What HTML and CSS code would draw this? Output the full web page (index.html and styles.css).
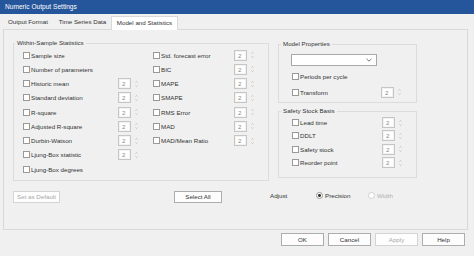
FILE: index.html
```html
<!DOCTYPE html>
<html lang="en">
<head>
    <meta charset="UTF-8">
    <title>Numeric Output Settings</title>
    <link rel="stylesheet" href="styles.css">
</head>
<body>
    <div class="titlebar">Numeric Output Settings</div>
    <div class="tabs">
        <div class="tab tab-format">Output Format</div>
        <div class="tab tab-series">Time Series Data</div>
        <div class="tab tab-model active">Model and Statistics</div>
    </div>
    <div class="tabpage">
        <div class="groups">
            <fieldset class="group stats">
                <legend>Within-Sample Statistics</legend>
                <div class="stats-cols">
                    <div class="stats-col left">
                        <div class="row"><span class="opt"><span class="check"></span>Sample size</span></div>
                        <div class="row"><span class="opt"><span class="check"></span>Number of parameters</span></div>
                        <div class="row"><span class="opt"><span class="check"></span>Historic mean</span><span class="spin"><span class="spin-box">2</span><svg class="spin-arrows" viewBox="0 0 5 10"><path d="M1.5 3.5 L2.5 2.5 L3.5 3.5 M1.5 6.5 L2.5 7.5 L3.5 6.5"/></svg></span></div>
                        <div class="row"><span class="opt"><span class="check"></span>Standard deviation</span><span class="spin"><span class="spin-box">2</span><svg class="spin-arrows" viewBox="0 0 5 10"><path d="M1.5 3.5 L2.5 2.5 L3.5 3.5 M1.5 6.5 L2.5 7.5 L3.5 6.5"/></svg></span></div>
                        <div class="row"><span class="opt"><span class="check"></span>R-square</span><span class="spin"><span class="spin-box">2</span><svg class="spin-arrows" viewBox="0 0 5 10"><path d="M1.5 3.5 L2.5 2.5 L3.5 3.5 M1.5 6.5 L2.5 7.5 L3.5 6.5"/></svg></span></div>
                        <div class="row"><span class="opt"><span class="check"></span>Adjusted R-square</span><span class="spin"><span class="spin-box">2</span><svg class="spin-arrows" viewBox="0 0 5 10"><path d="M1.5 3.5 L2.5 2.5 L3.5 3.5 M1.5 6.5 L2.5 7.5 L3.5 6.5"/></svg></span></div>
                        <div class="row"><span class="opt"><span class="check"></span>Durbin-Watson</span><span class="spin"><span class="spin-box">2</span><svg class="spin-arrows" viewBox="0 0 5 10"><path d="M1.5 3.5 L2.5 2.5 L3.5 3.5 M1.5 6.5 L2.5 7.5 L3.5 6.5"/></svg></span></div>
                        <div class="row"><span class="opt"><span class="check"></span>Ljung-Box statistic</span><span class="spin"><span class="spin-box">2</span><svg class="spin-arrows" viewBox="0 0 5 10"><path d="M1.5 3.5 L2.5 2.5 L3.5 3.5 M1.5 6.5 L2.5 7.5 L3.5 6.5"/></svg></span></div>
                        <div class="row"><span class="opt"><span class="check"></span>Ljung-Box degrees</span></div>
                    </div>
                    <div class="stats-col right">
                        <div class="row"><span class="opt"><span class="check"></span>Std. forecast error</span><span class="spin"><span class="spin-box">2</span><svg class="spin-arrows" viewBox="0 0 5 10"><path d="M1.5 3.5 L2.5 2.5 L3.5 3.5 M1.5 6.5 L2.5 7.5 L3.5 6.5"/></svg></span></div>
                        <div class="row"><span class="opt"><span class="check"></span>BIC</span><span class="spin"><span class="spin-box">2</span><svg class="spin-arrows" viewBox="0 0 5 10"><path d="M1.5 3.5 L2.5 2.5 L3.5 3.5 M1.5 6.5 L2.5 7.5 L3.5 6.5"/></svg></span></div>
                        <div class="row"><span class="opt"><span class="check"></span>MAPE</span><span class="spin"><span class="spin-box">2</span><svg class="spin-arrows" viewBox="0 0 5 10"><path d="M1.5 3.5 L2.5 2.5 L3.5 3.5 M1.5 6.5 L2.5 7.5 L3.5 6.5"/></svg></span></div>
                        <div class="row"><span class="opt"><span class="check"></span>SMAPE</span><span class="spin"><span class="spin-box">2</span><svg class="spin-arrows" viewBox="0 0 5 10"><path d="M1.5 3.5 L2.5 2.5 L3.5 3.5 M1.5 6.5 L2.5 7.5 L3.5 6.5"/></svg></span></div>
                        <div class="row"><span class="opt"><span class="check"></span>RMS Error</span><span class="spin"><span class="spin-box">2</span><svg class="spin-arrows" viewBox="0 0 5 10"><path d="M1.5 3.5 L2.5 2.5 L3.5 3.5 M1.5 6.5 L2.5 7.5 L3.5 6.5"/></svg></span></div>
                        <div class="row"><span class="opt"><span class="check"></span>MAD</span><span class="spin"><span class="spin-box">2</span><svg class="spin-arrows" viewBox="0 0 5 10"><path d="M1.5 3.5 L2.5 2.5 L3.5 3.5 M1.5 6.5 L2.5 7.5 L3.5 6.5"/></svg></span></div>
                        <div class="row"><span class="opt"><span class="check"></span>MAD/Mean Ratio</span><span class="spin"><span class="spin-box">2</span><svg class="spin-arrows" viewBox="0 0 5 10"><path d="M1.5 3.5 L2.5 2.5 L3.5 3.5 M1.5 6.5 L2.5 7.5 L3.5 6.5"/></svg></span></div>
                    </div>
                </div>
            </fieldset>

            <div class="side">
                <fieldset class="group model">
                    <legend>Model Properties</legend>
                    <div class="group-body">
                        <div class="dropdown">
                            <svg class="chevron" viewBox="0 0 6 4"><path d="M0.5 0.8 L3 3.2 L5.5 0.8"/></svg>
                        </div>
                        <div class="row"><span class="opt"><span class="check"></span>Periods per cycle</span></div>
                        <div class="row"><span class="opt"><span class="check"></span>Transform</span><span class="spin"><span class="spin-box">2</span><svg class="spin-arrows" viewBox="0 0 5 10"><path d="M1.5 3.5 L2.5 2.5 L3.5 3.5 M1.5 6.5 L2.5 7.5 L3.5 6.5"/></svg></span></div>
                    </div>
                </fieldset>
                <fieldset class="group safety">
                    <legend>Safety Stock Basis</legend>
                    <div class="group-body">
                        <div class="row"><span class="opt"><span class="check"></span>Lead time</span><span class="spin"><span class="spin-box">2</span><svg class="spin-arrows" viewBox="0 0 5 10"><path d="M1.5 3.5 L2.5 2.5 L3.5 3.5 M1.5 6.5 L2.5 7.5 L3.5 6.5"/></svg></span></div>
                        <div class="row"><span class="opt"><span class="check"></span>DDLT</span><span class="spin"><span class="spin-box">2</span><svg class="spin-arrows" viewBox="0 0 5 10"><path d="M1.5 3.5 L2.5 2.5 L3.5 3.5 M1.5 6.5 L2.5 7.5 L3.5 6.5"/></svg></span></div>
                        <div class="row"><span class="opt"><span class="check"></span>Safety stock</span><span class="spin"><span class="spin-box">2</span><svg class="spin-arrows" viewBox="0 0 5 10"><path d="M1.5 3.5 L2.5 2.5 L3.5 3.5 M1.5 6.5 L2.5 7.5 L3.5 6.5"/></svg></span></div>
                        <div class="row"><span class="opt"><span class="check"></span>Reorder point</span><span class="spin"><span class="spin-box">2</span><svg class="spin-arrows" viewBox="0 0 5 10"><path d="M1.5 3.5 L2.5 2.5 L3.5 3.5 M1.5 6.5 L2.5 7.5 L3.5 6.5"/></svg></span></div>
                    </div>
                </fieldset>
            </div>
        </div>

        <div class="actions">
            <button class="btn btn-default" disabled>Set as Default</button>
            <button class="btn btn-select">Select All</button>
            <div class="adjust">
                <span class="adjust-label">Adjust</span>
                <span class="radio-opt precision"><span class="radio checked"></span>Precision</span>
                <span class="radio-opt disabled"><span class="radio"></span>Width</span>
            </div>
        </div>
    </div>

    <div class="footer">
        <button class="btn">OK</button>
        <button class="btn">Cancel</button>
        <button class="btn" disabled>Apply</button>
        <button class="btn">Help</button>
    </div>
</body>
</html>
```

FILE: styles.css
```css
* {
    box-sizing: border-box;
}
body {
    margin: 0;
    width: 474px;
    height: 256px;
    overflow: hidden;
    background-color: #f0f0f0;
    font-family: "Liberation Sans", Arial, sans-serif;
    font-size: 6.2px;
    color: #333;
}
.titlebar {
    height: 14px;
    line-height: 14px;
    padding-left: 5px;
    background-color: #25569b;
    color: #fff;
    font-size: 6.6px;
}
.tabs {
    display: flex;
    align-items: flex-end;
    height: 15px;
    padding-left: 2px;
}
.tab {
    height: 13px;
    line-height: 12px;
    text-align: center;
    white-space: nowrap;
}
.tab-format {
    width: 52px;
}
.tab-series {
    width: 57px;
}
.tab-model {
    width: 67px;
}
.tab.active {
    position: relative;
    z-index: 1;
    height: 14px;
    margin-bottom: -1px;
    background-color: #fff;
    border: 1px solid #d9d9d9;
    border-bottom: none;
}
.tabpage {
    width: 465px;
    height: 201px;
    margin-left: 3px;
    padding: 9px 0 0 9px;
    border: 1px solid #d9d9d9;
}
.groups {
    display: flex;
    align-items: flex-start;
    gap: 9px;
}
.group {
    margin: 0;
    min-width: 0;
    border: 1px solid #dcdcdc;
}
.group legend {
    height: 8px;
    line-height: 8px;
    padding: 0 2px;
    white-space: nowrap;
}
.stats {
    width: 256px;
    padding: 1px 0 4px 0;
}
.stats legend {
    margin-left: 1px;
}
.stats-cols {
    display: flex;
    padding-left: 9px;
}
.stats-col.left {
    width: 130px;
}
.row {
    display: flex;
    align-items: center;
    height: 14.25px;
    white-space: nowrap;
}
.opt {
    display: flex;
    align-items: center;
    gap: 1px;
}
.stats .left .opt {
    width: 95px;
}
.stats .right .opt {
    width: 81px;
}
.check {
    width: 7px;
    height: 7px;
    border: 1px solid #999;
    background-color: #fff;
}
.spin {
    display: flex;
    align-items: center;
    gap: 3px;
}
.spin-box {
    width: 13px;
    height: 11px;
    padding-left: 3px;
    line-height: 9px;
    border: 1px solid #c6c6c6;
    background-color: #fff;
    box-shadow: inset 0 0 0 1px #f2f2f2;
    color: #8a8a8a;
}
.spin-arrows {
    width: 5px;
    height: 10px;
    fill: none;
    stroke: #b8b8b8;
    stroke-width: 0.8;
}
.side {
    display: flex;
    flex-direction: column;
    gap: 4px;
    width: 139px;
    margin-top: 1px;
}
.side .group {
    padding: 0;
}
.side legend {
    margin-left: 2px;
}
.model .group-body {
    padding: 6px 0 3px 13px;
}
.model .row {
    height: 14px;
}
.model .row + .row {
    margin-top: 2px;
}
.model .opt {
    width: 89px;
}
.dropdown {
    display: flex;
    align-items: center;
    justify-content: flex-end;
    width: 86px;
    height: 12px;
    margin: 0 0 3px -1px;
    padding-right: 4px;
    border: 1px solid #a8a8a8;
    background-color: #fff;
}
.chevron {
    width: 6px;
    height: 4px;
    fill: none;
    stroke: #555;
    stroke-width: 0.8;
}
.safety .group-body {
    padding: 1px 0 8px 13px;
}
.safety .row {
    height: 13.33px;
}
.safety .opt {
    width: 90px;
}
.actions {
    display: flex;
    align-items: center;
    margin-top: 10px;
}
.btn {
    height: 12px;
    padding: 0;
    border: 1px solid #adadad;
    border-radius: 0;
    background-color: #fdfdfd;
    font-family: inherit;
    font-size: 6.2px;
    line-height: 10px;
    color: #333;
    text-align: center;
}
.btn:disabled {
    border-color: #d4d4d4;
    color: #a8a8a8;
}
.btn-default {
    width: 47px;
}
.btn-select {
    width: 48px;
    margin-left: 114px;
}
.adjust {
    display: flex;
    align-items: center;
    margin: -3px 0 0 48px;
}
.adjust-label {
    width: 46px;
}
.radio-opt {
    display: flex;
    align-items: center;
    gap: 2px;
}
.radio-opt.precision {
    width: 52px;
}
.radio {
    width: 7px;
    height: 7px;
    border: 1px solid #999;
    border-radius: 50%;
    background-color: #fff;
}
.radio.checked {
    background: radial-gradient(circle, #333 1.2px, #fff 1.7px);
}
.radio-opt.disabled {
    color: #b0b0b0;
}
.radio-opt.disabled .radio {
    border-color: #cfcfcf;
}
.footer {
    display: flex;
    justify-content: flex-end;
    gap: 4px;
    padding: 3px 9px 0 0;
}
.footer .btn {
    width: 43px;
    height: 13px;
    line-height: 11px;
}
```
